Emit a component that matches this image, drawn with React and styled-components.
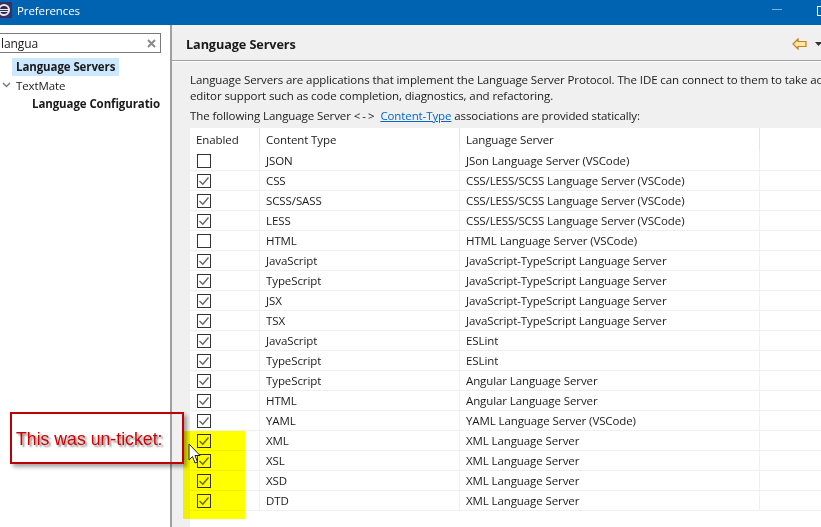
import styled, { createGlobalStyle } from "styled-components";

const GlobalStyle = createGlobalStyle`
  html, body {
    margin: 0;
    padding: 0;
    width: 821px;
    height: 527px;
    overflow: hidden;
    background: #f0f0f0;
  }
  * {
    box-sizing: border-box;
  }
`;

const rows = [
  [false, "JSON", "JSon Language Server (VSCode)"],
  [true, "CSS", "CSS/LESS/SCSS Language Server (VSCode)"],
  [true, "SCSS/SASS", "CSS/LESS/SCSS Language Server (VSCode)"],
  [true, "LESS", "CSS/LESS/SCSS Language Server (VSCode)"],
  [false, "HTML", "HTML Language Server (VSCode)"],
  [true, "JavaScript", "JavaScript-TypeScript Language Server"],
  [true, "TypeScript", "JavaScript-TypeScript Language Server"],
  [true, "JSX", "JavaScript-TypeScript Language Server"],
  [true, "TSX", "JavaScript-TypeScript Language Server"],
  [true, "JavaScript", "ESLint"],
  [true, "TypeScript", "ESLint"],
  [true, "TypeScript", "Angular Language Server"],
  [true, "HTML", "Angular Language Server"],
  [true, "YAML", "YAML Language Server (VSCode)"],
  [true, "XML", "XML Language Server"],
  [true, "XSL", "XML Language Server"],
  [true, "XSD", "XML Language Server"],
  [true, "DTD", "XML Language Server"],
];

const Page = styled.div`
  position: relative;
  width: 821px;
  height: 527px;
  overflow: hidden;
  display: flex;
  flex-direction: column;
  font-family: "Open Sans", "Noto Sans", sans-serif;
  font-size: 11.5px;
  letter-spacing: -0.1px;
  color: #1a1a1a;
  background: #f0f0f0;
`;

const TitleBar = styled.div`
  height: 25px;
  flex: none;
  background: #0063b1;
  color: #fff;
  display: flex;
  align-items: center;
  position: relative;
  padding: 0 0 5px 17px;
  font-size: 11.5px;
`;

const TitleLogo = styled.svg`
  position: absolute;
  left: -2px;
  top: 1px;
`;

const WinMin = styled.div`
  position: absolute;
  left: 772px;
  top: 9px;
  width: 10px;
  height: 1px;
  background: #7fb1d8;
`;

const WinMax = styled.div`
  position: absolute;
  left: 817px;
  top: 6px;
  width: 10px;
  height: 10px;
  border: 1px solid #fff;
`;

const Body = styled.div`
  flex: 1;
  display: flex;
  min-height: 0;
`;

const Sidebar = styled.div`
  width: 172px;
  flex: none;
  background: #fff;
  border-right: 2px solid #a0a0a0;
  padding-top: 8px;
`;

const SearchBox = styled.div`
  width: 161px;
  height: 20px;
  border: 1px solid #7a7a7a;
  border-left: none;
  display: flex;
  align-items: center;
  justify-content: space-between;
  padding: 0 4px 0 1px;
  font-size: 12px;
`;

const ClearIcon = styled.svg`
  display: block;
`;

const Tree = styled.div`
  display: flex;
  flex-direction: column;
  margin-top: 5px;
  width: 160px;
  overflow: hidden;
`;

const TreeRow = styled.div`
  height: 18px;
  display: flex;
  align-items: center;
  white-space: nowrap;
  font-weight: ${(p) => (p.$bold ? 700 : 400)};
  padding-left: ${(p) => p.$indent}px;
`;

const Selected = styled.span`
  background: #cce8ff;
  height: 18px;
  line-height: 18px;
  padding: 0 4px;
  margin-left: -4px;
`;

const Chevron = styled.svg`
  position: absolute;
  left: 2px;
`;

const Main = styled.div`
  flex: 1;
  min-width: 0;
  display: flex;
  flex-direction: column;
`;

const Header = styled.div`
  height: 36px;
  flex: none;
  display: flex;
  align-items: center;
  justify-content: space-between;
  padding: 2px 0 0 14px;
  border-bottom: 1px solid #a0a0a0;
  box-shadow: 0 1px 0 #fff;
`;

const HeaderTitle = styled.div`
  font-weight: 700;
  font-size: 12.7px;
`;

const HeaderTools = styled.div`
  display: flex;
  align-items: center;
  gap: 8px;
  margin-right: -1px;
`;

const Content = styled.div`
  flex: 1;
  min-height: 0;
  padding: 11px 0 0 18px;
  display: flex;
  flex-direction: column;
`;

const Para = styled.div`
  line-height: 16px;
  white-space: nowrap;
  margin-bottom: ${(p) => p.$gap || 0}px;
`;

const Arrows = styled.span`
  letter-spacing: 2px;
  margin-right: 1px;
`;

const DocLink = styled.span`
  color: #0066cc;
  text-decoration: underline;
`;

const Table = styled.div`
  flex: 1;
  background: #fff;
  margin-top: 4px;
  width: 640px;
`;

const Row = styled.div`
  display: grid;
  grid-template-columns: 70px 200px 300px 1fr;
  height: ${(p) => (p.$head ? 23 : 20)}px;
  border-bottom: ${(p) => (p.$head ? "none" : "1px solid #f0f0f0")};
`;

const Cell = styled.div`
  display: flex;
  align-items: center;
  padding-left: 6px;
  white-space: nowrap;
  border-right: 1px solid ${(p) => (p.$head ? "#e5e5e5" : "#f0f0f0")};
`;

const Box = styled.div`
  width: 14px;
  height: 14px;
  margin-left: 1px;
  border: 1px solid #333;
  background: #fff;
  display: flex;
  align-items: center;
  justify-content: center;
`;

const Highlight = styled.div`
  position: absolute;
  left: 183px;
  top: 431px;
  width: 62px;
  height: 88px;
  background: #ffff00;
  mix-blend-mode: multiply;
`;

const Note = styled.div`
  position: absolute;
  left: 10px;
  top: 412px;
  width: 174px;
  height: 52px;
  border: 2px solid #c00000;
  box-shadow: 3px 3px 4px rgba(0, 0, 0, 0.35);
  display: flex;
  align-items: center;
  padding: 2px 0 0 4px;
  font-family: "Liberation Sans", Arial, sans-serif;
  font-size: 17.7px;
  letter-spacing: 0;
  color: #d00000;
  text-shadow: 2px 2px 2px rgba(0, 0, 0, 0.45);
  white-space: nowrap;
`;

const Pointer = styled.svg`
  position: absolute;
  left: 188px;
  top: 443px;
`;

const Check = () => (
  <svg width="10" height="10" viewBox="0 0 10 10">
    <path d="M0.5 5 L3.8 8.2 L9.5 1.5" fill="none" stroke="#666" strokeWidth="1.4" />
  </svg>
);

const App = () => {
  return (
    <Page>
      <GlobalStyle />
      <TitleBar>
        <TitleLogo width="14" height="20" viewBox="0 0 14 20">
          <rect x="0" y="1" width="14" height="16" fill="#3a2f63" />
          <circle cx="6" cy="9" r="6" fill="#e8e8ee" />
          <circle cx="6" cy="9" r="4" fill="#2c2650" />
          <rect x="1" y="8" width="10" height="1" fill="#e8e8ee" />
          <rect x="1" y="10" width="10" height="1" fill="#e8e8ee" />
        </TitleLogo>
        Preferences
        <WinMin />
        <WinMax />
      </TitleBar>
      <Body>
        <Sidebar>
          <SearchBox>
            langua
            <ClearIcon width="9" height="9" viewBox="0 0 9 9">
              <path d="M1 1 L8 8 M8 1 L1 8" stroke="#8a8a8a" strokeWidth="2" />
            </ClearIcon>
          </SearchBox>
          <Tree>
            <TreeRow $bold $indent={16}>
              <Selected>Language Servers</Selected>
            </TreeRow>
            <TreeRow $indent={16}>
              <Chevron width="9" height="6" viewBox="0 0 9 6">
                <path d="M1 1 L4.5 4.5 L8 1" fill="none" stroke="#777" strokeWidth="1.4" />
              </Chevron>
              TextMate
            </TreeRow>
            <TreeRow $bold $indent={32}>
              Language Configuration
            </TreeRow>
          </Tree>
        </Sidebar>
        <Main>
          <Header>
            <HeaderTitle>Language Servers</HeaderTitle>
            <HeaderTools>
              <svg width="15" height="12" viewBox="0 0 15 12">
                <path
                  d="M6 1 L1 6 L6 11 L6 8.5 L14 8.5 L14 3.5 L6 3.5 Z"
                  fill="#fbe6a8"
                  stroke="#c4801a"
                  strokeWidth="1.2"
                />
              </svg>
              <svg width="7" height="4" viewBox="0 0 7 4">
                <path d="M0 0 L7 0 L3.5 4 Z" fill="#333" />
              </svg>
            </HeaderTools>
          </Header>
          <Content>
            <Para>
              Language Servers are applications that implement the Language Server Protocol. The IDE can connect to them to take advantage of
            </Para>
            <Para $gap={4}>editor support such as code completion, diagnostics, and refactoring.</Para>
            <Para>
              The following Language Server <Arrows>{"<->"}</Arrows> <DocLink>Content-Type</DocLink> associations are provided statically:
            </Para>
            <Table>
              <Row $head>
                <Cell $head>Enabled</Cell>
                <Cell $head>Content Type</Cell>
                <Cell $head>Language Server</Cell>
                <Cell $head />
              </Row>
              {rows.map(([on, type, server], i) => (
                <Row key={i}>
                  <Cell>
                    <Box>{on && <Check />}</Box>
                  </Cell>
                  <Cell>{type}</Cell>
                  <Cell>{server}</Cell>
                  <Cell />
                </Row>
              ))}
            </Table>
          </Content>
        </Main>
      </Body>
      <Highlight />
      <Note>This was un-ticket:</Note>
      <Pointer width="13" height="22" viewBox="0 0 13 22">
        <path d="M1 1 L1 17 L4.5 13.5 L7 20 L9.5 19 L7 12.5 L12 12.5 Z" fill="#fff" stroke="#222" strokeWidth="1" />
      </Pointer>
    </Page>
  );
};

export default App;
